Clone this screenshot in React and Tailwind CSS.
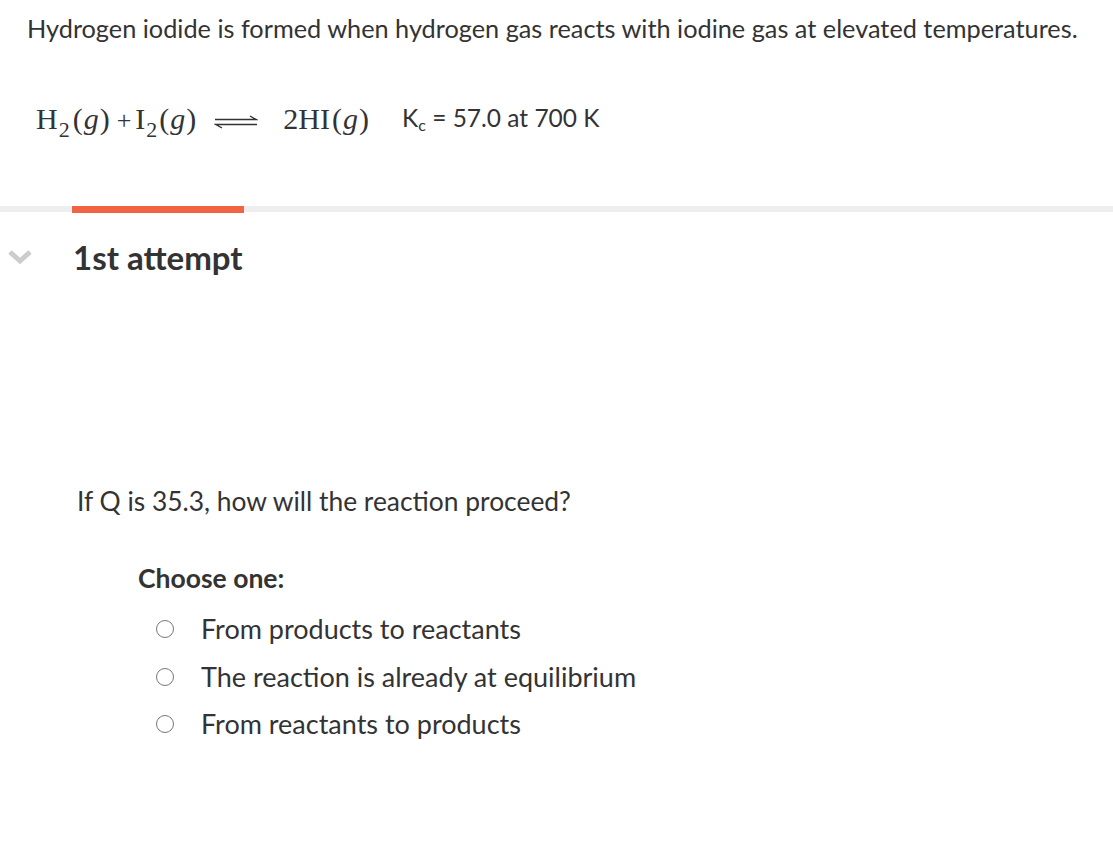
export default function App() {
  const options = [
    'From products to reactants',
    'The reaction is already at equilibrium',
    'From reactants to products',
  ];

  return (
    <div className="min-h-[862px] bg-white text-[#333] font-['Lato',sans-serif]">
      <p className="pl-[27px] pt-[12px] text-[25.3px] leading-[32px]">
        Hydrogen iodide is formed when hydrogen gas reacts with iodine gas at elevated temperatures.
      </p>

      <div className="flex items-center pl-[36px] mt-[54px] h-[40px]">
        <div className="flex items-baseline font-['Liberation_Serif',serif] text-[30px] text-[#333]">
          <span>H</span>
          <span className="text-[22px] relative top-[8px] ml-[1px]">2</span>
          <span className="ml-[3px]">(</span>
          <i className="ml-[1px]">g</i>
          <span className="ml-[1px]">)</span>
          <span className="ml-[7px] mr-[4px] text-[26px]">+</span>
          <span>I</span>
          <span className="text-[22px] relative top-[8px] ml-[1px]">2</span>
          <span className="ml-[2px]">(</span>
          <i className="ml-[1px]">g</i>
          <span className="ml-[1px]">)</span>
        </div>
        <svg width="44" height="14" viewBox="0 0 44 14" className="ml-[18px] mt-[8px]">
          <path d="M1 4.5 H42 L36 1" fill="none" stroke="#333" strokeWidth="1.4" />
          <path d="M43 9.5 H2 L8 13" fill="none" stroke="#333" strokeWidth="1.4" />
        </svg>
        <div className="flex items-baseline ml-[25px] font-['Liberation_Serif',serif] text-[30px] text-[#333]">
          <span>2HI</span>
          <span className="ml-[2px]">(</span>
          <i className="ml-[1px]">g</i>
          <span className="ml-[1px]">)</span>
        </div>
        <span className="ml-[33px] text-[24.5px]">
          K<sub className="text-[16px]">c</sub> = 57.0 at 700 K
        </span>
      </div>

      <div className="mt-[68px] relative h-[6px] bg-[#eeeeee]">
        <div className="absolute left-[72px] top-0 h-[7px] w-[172px] bg-[#f06444]" />
      </div>

      <div className="flex items-center mt-[25px] h-[40px]">
        <svg width="26" height="18" viewBox="0 0 26 18" className="ml-[7px]">
          <path d="M3 4 L13 13 L23 4" fill="none" stroke="#cccccc" strokeWidth="5" />
        </svg>
        <h2 className="ml-[40px] text-[33px] font-bold text-[#333] leading-[40px]">1st attempt</h2>
      </div>

      <p className="pl-[77px] mt-[208px] text-[26.4px] leading-[32px]">
        If Q is 35.3, how will the reaction proceed?
      </p>

      <div className="pl-[138px] mt-[45px]">
        <p className="text-[26.5px] font-bold leading-[32px]">Choose one:</p>
        <div className="mt-[19px] flex flex-col gap-[15.5px]">
          {options.map((o) => (
            <label key={o} className="flex items-center h-[32px]">
              <span className="ml-[18px] w-[18px] h-[18px] rounded-full border border-[#777] bg-white" />
              <span className="ml-[27px] text-[27px] leading-[32px]">{o}</span>
            </label>
          ))}
        </div>
      </div>
    </div>
  );
}
